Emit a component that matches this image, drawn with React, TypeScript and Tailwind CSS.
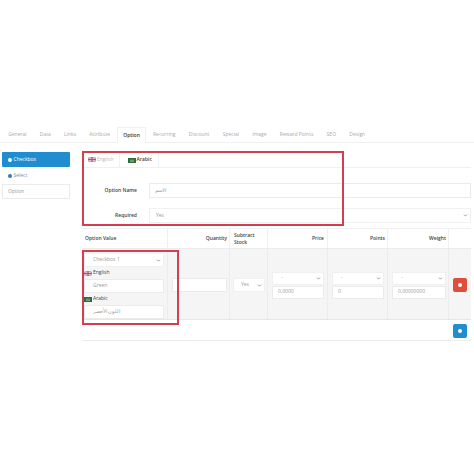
import React from 'react';
import { ChevronDown } from 'lucide-react';

const tabs = ['General', 'Data', 'Links', 'Attribute', 'Option', 'Recurring', 'Discount', 'Special', 'Image', 'Reward Points', 'SEO', 'Design'];

function UkFlag() {
  return (
    <svg width="8" height="5" viewBox="0 0 8 5" className="shrink-0">
      <rect width="8" height="5" fill="#c9a0b0" />
      <path d="M0 0L8 5M8 0L0 5" stroke="#e8d8de" strokeWidth="0.8" />
      <path d="M4 0V5M0 2.5H8" stroke="#b5506e" strokeWidth="1" />
    </svg>
  );
}

function SaFlag() {
  return (
    <svg width="8" height="5" viewBox="0 0 8 5" className="shrink-0">
      <rect width="8" height="5" fill="#2f6b3c" />
      <path d="M2 2.2H6M2 3.4H6" stroke="#cfe0d2" strokeWidth="0.5" />
    </svg>
  );
}

function Field({ value, className = '' }: { value: string; className?: string }) {
  return (
    <div className={`flex items-center bg-white border border-[#ebebeb] text-[5px] text-[#999] ${className}`}>
      {value}
    </div>
  );
}

function Select({ value, className = '' }: { value: string; className?: string }) {
  return (
    <div className={`flex items-center justify-between bg-white border border-[#f0f0f0] pr-[2px] text-[5px] text-[#999] ${className}`}>
      <span>{value}</span>
      <ChevronDown size={5} strokeWidth={3} className="text-[#666]" />
    </div>
  );
}

function CircleBtn({ color }: { color: string }) {
  return (
    <div className={`w-[14px] h-[14px] rounded-[2px] flex items-center justify-center ${color}`}>
      <div className="w-[4px] h-[4px] rounded-full bg-white" />
    </div>
  );
}

export default function App() {
  return (
    <div className="w-[474px] h-[474px] overflow-hidden bg-white pt-[127px] text-[5px] text-[#444]" style={{ fontFamily: '"Open Sans", sans-serif' }}>
      {/* main tabs */}
      <div className="flex h-[16px] border-b border-[#f0f0f0] pl-[1.5px]">
        {tabs.map((t) =>
          t === 'Option' ? (
            <div key={t} className="h-[16px] flex items-center px-[5.5px] border border-b-0 border-[#f0f0f0] bg-white font-semibold text-[#333]">
              {t}
            </div>
          ) : (
            <div key={t} className="h-[16px] flex items-center px-[6.65px] text-[#aaa]">
              {t}
            </div>
          )
        )}
      </div>

      <div className="flex mt-[9px] pl-[2px] pr-[3px]">
        {/* left column */}
        <div className="w-[68px] shrink-0 mr-[12px]">
          <div className="h-[15px] bg-[#1f8dd0] rounded-[1px] flex items-center gap-[1.5px] pl-[6px] text-white">
            <span className="w-[4px] h-[4px] rounded-full bg-white" />
            Checkbox
          </div>
          <div className="h-[17px] flex items-center gap-[1.5px] pl-[6px] text-[#7d8a96]">
            <span className="w-[4px] h-[4px] rounded-full bg-[#2a7fb8]" />
            Select
          </div>
          <Field value="Option" className="h-[15px] pl-[5px]" />
        </div>

        {/* right column */}
        <div className="flex-1 min-w-0 relative">
          <div className="flex h-[16px] border-b border-[#f0f0f0] pl-[6px] items-stretch">
            <div className="flex items-center gap-[1px] pr-[5px] text-[#bbb]">
              <UkFlag />
              English
            </div>
            <div className="flex items-center gap-[1px] pl-[8px] pr-[6px] border border-b-0 border-[#f0f0f0] font-semibold text-[#444]">
              <SaFlag />
              Arabic
            </div>
          </div>

          <div className="flex items-center mt-[15px] h-[15px]">
            <div className="w-[55px] text-right font-semibold text-[#444]">Option Name</div>
            <Field value="الاسم" className="ml-[12px] flex-1 h-[15px] pl-[5px]" />
          </div>
          <div className="flex items-center mt-[10px] h-[15px]">
            <div className="w-[55px] text-right font-semibold text-[#444]">Required</div>
            <Select value="Yes" className="ml-[12px] flex-1 h-[15px] pl-[6px]" />
          </div>

          {/* table */}
          <div className="mt-[5px] border-t border-[#f0f0f0]">
            <div className="flex h-[20px] font-semibold text-[#444] border-b border-[#ececec]">
              <div className="w-[86px] flex items-center pl-[3px] border-r border-[#f0f0f0]">Option Value</div>
              <div className="w-[62px] flex items-center justify-end pr-[2px] border-r border-[#f0f0f0]">Quantity</div>
              <div className="w-[38px] flex items-center pl-[4px] leading-[7px] border-r border-[#f0f0f0]">Subtract<br />Stock</div>
              <div className="w-[60px] flex items-center justify-end pr-[3px] border-r border-[#f0f0f0]">Price</div>
              <div className="w-[60px] flex items-center justify-end pr-[2px] border-r border-[#f0f0f0]">Points</div>
              <div className="w-[61px] flex items-center justify-end pr-[2px] border-r border-[#f0f0f0]">Weight</div>
              <div className="flex-1" />
            </div>

            <div className="flex h-[71px] bg-[#f5f5f5] border-b border-[#e6e6e6]">
              <div className="w-[86px] pl-[2px] pr-[3px] pt-[4px] border-r border-[#ececec]">
                <Select value="Checkbox 1" className="h-[14px] pl-[8px]" />
                <div className="flex items-center gap-[1px] h-[12px] font-medium text-[#444]"><UkFlag />English</div>
                <Field value="Green" className="h-[14px] pl-[8px]" />
                <div className="flex items-center gap-[1px] h-[12px] font-medium text-[#444]"><SaFlag />Arabic</div>
                <Field value="اللون الأخضر" className="h-[14px] pl-[8px] text-[4px]" />
              </div>
              <div className="w-[62px] flex items-center pl-[4px] pr-[2px] pt-[2px] border-r border-[#ececec]">
                <Field value="" className="w-full h-[14px]" />
              </div>
              <div className="w-[38px] flex items-center pl-[3px] pr-[2px] pt-[2px] border-r border-[#ececec]">
                <Select value="Yes" className="w-full h-[14px] pl-[7px]" />
              </div>
              <div className="w-[60px] flex flex-col justify-center pl-[4px] pr-[3px] pt-[2px] gap-[1px] border-r border-[#ececec]">
                <Select value="-" className="h-[13px] pl-[8px]" />
                <Field value="0.0000" className="h-[13px] pl-[5px]" />
              </div>
              <div className="w-[60px] flex flex-col justify-center pl-[4px] pr-[3px] pt-[2px] gap-[1px] border-r border-[#ececec]">
                <Select value="-" className="h-[13px] pl-[8px]" />
                <Field value="0" className="h-[13px] pl-[5px]" />
              </div>
              <div className="w-[61px] flex flex-col justify-center pl-[4px] pr-[2px] pt-[2px] gap-[1px] border-r border-[#ececec]">
                <Select value="-" className="h-[13px] pl-[8px]" />
                <Field value="0.00000000" className="h-[13px] pl-[5px]" />
              </div>
              <div className="flex-1 flex items-center justify-center pt-[2px]">
                <CircleBtn color="bg-[#e24c3c]" />
              </div>
            </div>

            <div className="flex justify-end items-center h-[21px] border-b border-[#ececec] pr-[4px] pt-[1px]">
              <CircleBtn color="bg-[#1f8dd0]" />
            </div>
          </div>

          {/* red highlights */}
          <div className="absolute left-0 top-[-1px] w-[262px] h-[75px] border-2 border-[#d33f4e]" />
          <div className="absolute left-0 top-[98px] w-[97px] h-[75px] border-2 border-[#d33f4e]" />
        </div>
      </div>
    </div>
  );
}
